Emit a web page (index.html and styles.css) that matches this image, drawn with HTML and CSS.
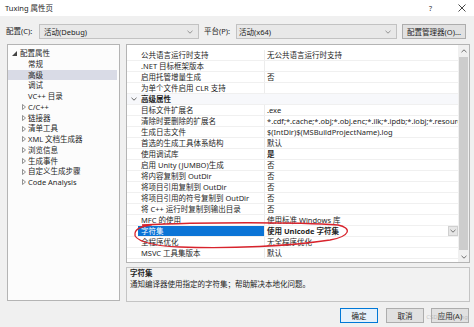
FILE: index.html
```html
<!DOCTYPE html>
<html lang="zh-CN">
<head>
    <meta charset="UTF-8">
    <title>Tuxing 属性页</title>
    <link rel="stylesheet" href="styles.css">
</head>
<body>
<div class="window">
    <div class="titlebar">
        <span class="title">Tuxing 属性页</span>
        <span class="help">?</span>
        <svg class="close" width="8" height="8" viewBox="0 0 8 8"><path d="M0.5 0.5L7.5 7.5M7.5 0.5L0.5 7.5" stroke="#333" stroke-width="0.9" fill="none"/></svg>
    </div>

    <div class="toolbar">
        <span class="lbl lbl-config">配置(C):</span>
        <div class="combo combo-config">
            <span>活动(Debug)</span>
            <svg width="6" height="4" viewBox="0 0 6 4"><path d="M0.5 0.8L3 3.2L5.5 0.8" stroke="#8a8a8a" stroke-width="0.9" fill="none"/></svg>
        </div>
        <span class="lbl lbl-platform">平台(P):</span>
        <div class="combo combo-platform">
            <span>活动(x64)</span>
            <svg width="6" height="4" viewBox="0 0 6 4"><path d="M0.5 0.8L3 3.2L5.5 0.8" stroke="#8a8a8a" stroke-width="0.9" fill="none"/></svg>
        </div>
        <button class="btn btn-manager">配置管理器(O)...</button>
    </div>

    <div class="content">
        <div class="tree">
            <div class="node lvl0"><svg class="tw" width="5" height="5" viewBox="0 0 5 5"><path d="M5 0L5 5L0 5Z" fill="#444"/></svg>配置属性</div>
            <div class="node lvl1">常规</div>
            <div class="node lvl1 selected">高级</div>
            <div class="node lvl1">调试</div>
            <div class="node lvl1">VC++ 目录</div>
            <div class="node lvl1 parent"><svg class="tw" width="4" height="6" viewBox="0 0 4 6"><path d="M0.5 0.5L3.5 3L0.5 5.5Z" fill="none" stroke="#777" stroke-width="0.8"/></svg>C/C++</div>
            <div class="node lvl1 parent"><svg class="tw" width="4" height="6" viewBox="0 0 4 6"><path d="M0.5 0.5L3.5 3L0.5 5.5Z" fill="none" stroke="#777" stroke-width="0.8"/></svg>链接器</div>
            <div class="node lvl1 parent"><svg class="tw" width="4" height="6" viewBox="0 0 4 6"><path d="M0.5 0.5L3.5 3L0.5 5.5Z" fill="none" stroke="#777" stroke-width="0.8"/></svg>清单工具</div>
            <div class="node lvl1 parent"><svg class="tw" width="4" height="6" viewBox="0 0 4 6"><path d="M0.5 0.5L3.5 3L0.5 5.5Z" fill="none" stroke="#777" stroke-width="0.8"/></svg>XML 文档生成器</div>
            <div class="node lvl1 parent"><svg class="tw" width="4" height="6" viewBox="0 0 4 6"><path d="M0.5 0.5L3.5 3L0.5 5.5Z" fill="none" stroke="#777" stroke-width="0.8"/></svg>浏览信息</div>
            <div class="node lvl1 parent"><svg class="tw" width="4" height="6" viewBox="0 0 4 6"><path d="M0.5 0.5L3.5 3L0.5 5.5Z" fill="none" stroke="#777" stroke-width="0.8"/></svg>生成事件</div>
            <div class="node lvl1 parent"><svg class="tw" width="4" height="6" viewBox="0 0 4 6"><path d="M0.5 0.5L3.5 3L0.5 5.5Z" fill="none" stroke="#777" stroke-width="0.8"/></svg>自定义生成步骤</div>
            <div class="node lvl1 parent"><svg class="tw" width="4" height="6" viewBox="0 0 4 6"><path d="M0.5 0.5L3.5 3L0.5 5.5Z" fill="none" stroke="#777" stroke-width="0.8"/></svg>Code Analysis</div>
        </div>

        <div class="right">
            <div class="grid">
                <div class="rows">
                    <div class="row"><span class="gut"></span><span class="name">公共语言运行时支持</span><span class="val">无公共语言运行时支持</span></div>
                    <div class="row"><span class="gut"></span><span class="name">.NET 目标框架版本</span><span class="val"></span></div>
                    <div class="row"><span class="gut"></span><span class="name">启用托管增量生成</span><span class="val">否</span></div>
                    <div class="row"><span class="gut"></span><span class="name">为单个文件启用 CLR 支持</span><span class="val"></span></div>
                    <div class="row category"><span class="gut"><svg width="6" height="4" viewBox="0 0 6 4"><path d="M0.5 0.8L3 3.2L5.5 0.8" stroke="#555" stroke-width="0.9" fill="none"/></svg></span><span class="name">高级属性</span></div>
                    <div class="row"><span class="gut"></span><span class="name">目标文件扩展名</span><span class="val">.exe</span></div>
                    <div class="row"><span class="gut"></span><span class="name">清除时要删除的扩展名</span><span class="val">*.cdf;*.cache;*.obj;*.obj.enc;*.ilk;*.ipdb;*.iobj;*.resources;*.tlb;*.tli</span></div>
                    <div class="row"><span class="gut"></span><span class="name">生成日志文件</span><span class="val">$(IntDir)$(MSBuildProjectName).log</span></div>
                    <div class="row"><span class="gut"></span><span class="name">首选的生成工具体系结构</span><span class="val">默认</span></div>
                    <div class="row"><span class="gut"></span><span class="name">使用调试库</span><span class="val bold">是</span></div>
                    <div class="row"><span class="gut"></span><span class="name">启用 Unity (JUMBO)生成</span><span class="val">否</span></div>
                    <div class="row"><span class="gut"></span><span class="name">将内容复制到 OutDir</span><span class="val">否</span></div>
                    <div class="row"><span class="gut"></span><span class="name">将项目引用复制到 OutDir</span><span class="val">否</span></div>
                    <div class="row"><span class="gut"></span><span class="name">将项目引用的符号复制到 OutDir</span><span class="val">否</span></div>
                    <div class="row"><span class="gut"></span><span class="name">将 C++ 运行时复制到输出目录</span><span class="val">否</span></div>
                    <div class="row"><span class="gut"></span><span class="name">MFC 的使用</span><span class="val">使用标准 Windows 库</span></div>
                    <div class="row selected"><span class="gut"></span><span class="name">字符集</span><span class="val bold">使用 Unicode 字符集<span class="drop"><svg width="6" height="4" viewBox="0 0 6 4"><path d="M0.5 0.8L3 3.2L5.5 0.8" stroke="#666" stroke-width="0.9" fill="none"/></svg></span></span></div>
                    <div class="row"><span class="gut"></span><span class="name">全程序优化</span><span class="val">无全程序优化</span></div>
                    <div class="row"><span class="gut"></span><span class="name">MSVC 工具集版本</span><span class="val">默认</span></div>
                </div>
                <div class="scrollbar">
                    <div class="arrow"><svg width="6" height="4" viewBox="0 0 6 4"><path d="M0.5 3.2L3 0.8L5.5 3.2" stroke="#606060" stroke-width="0.9" fill="none"/></svg></div>
                    <div class="thumb"></div>
                    <div class="arrow"><svg width="6" height="4" viewBox="0 0 6 4"><path d="M0.5 0.8L3 3.2L5.5 0.8" stroke="#606060" stroke-width="0.9" fill="none"/></svg></div>
                </div>
            </div>
            <div class="desc">
                <div class="desc-title">字符集</div>
                <div class="desc-text">通知编译器使用指定的字符集；帮助解决本地化问题。</div>
            </div>
        </div>
    </div>

    <div class="footer">
        <button class="btn btn-ok">确定</button>
        <button class="btn btn-cancel">取消</button>
        <button class="btn btn-apply">应用(A)</button>
    </div>

    <span class="watermark">CSDN @Tuxing</span>

    <!-- hand drawn red mark around the 字符集 row -->
    <svg class="mark" width="474" height="327" viewBox="0 0 474 327">
        <path d="M142 225 C200 222 300 222 338 225 C352 228 351 236 330 240 C290 246 232 249 180 247 C150 246 133 240 135 233 C136 229 140 226 152 225" fill="none" stroke="#d8232c" stroke-width="1.3"/>
    </svg>
</div>
</body>
</html>
```

FILE: styles.css
```css
* {
    box-sizing: border-box;
}

body {
    margin: 0;
    padding: 0;
    background-color: #f0f0f0;
    font-family: "Noto Sans", "Noto Sans CJK SC", sans-serif;
    font-size: 7.5px;
    color: #1e1e1e;
}

.window {
    position: relative;
    width: 474px;
    height: 327px;
    overflow: hidden;
}

.titlebar {
    display: flex;
    align-items: center;
    height: 16px;
    padding-left: 5px;
    background-color: #ffffff;
}

.title {
    flex: 1;
    line-height: 14px;
}

.help {
    width: 8px;
    margin-right: 21px;
    color: #333;
    font-size: 7px;
}

.close {
    margin-right: 8px;
}

.toolbar {
    display: flex;
    align-items: center;
    height: 15px;
    margin-top: 8px;
    padding-left: 6px;
}

.lbl {
    line-height: 15px;
}

.lbl-config {
    width: 33px;
}

.lbl-platform {
    width: 32px;
    margin-left: 5px;
}

.combo {
    display: flex;
    align-items: center;
    justify-content: space-between;
    height: 15px;
    padding: 0 5px 0 4px;
    background-color: #e8e8e8;
    border: 1px solid #c2c2c2;
}

.combo-config {
    width: 160px;
}

.combo-platform {
    width: 161px;
    padding-left: 2px;
}

.btn {
    height: 15px;
    padding: 0;
    font-family: inherit;
    font-size: 7.5px;
    color: #1e1e1e;
    background-color: #e1e1e1;
    border: 1px solid #adadad;
}

.btn-manager {
    width: 64px;
    margin-left: 5px;
}

.content {
    display: flex;
    gap: 6px;
    margin-top: 5px;
    padding-left: 7px;
}

.tree {
    width: 113px;
    height: 257px;
    padding: 3px 2px 0 0;
    background-color: #fcfcfc;
    border: 1px solid #b4b4b4;
}

.node {
    display: flex;
    align-items: center;
    height: 10.75px;
    line-height: 10.75px;
    white-space: nowrap;
}

.node .tw {
    flex: none;
}

.lvl0 {
    padding-left: 4px;
}

.lvl0 .tw {
    margin-right: 3px;
}

.lvl1 {
    padding-left: 20px;
}

.lvl1.parent {
    padding-left: 14px;
}

.lvl1.parent .tw {
    margin-right: 2px;
}

.node.selected {
    background-color: #d9dbe6;
}

.right {
    display: flex;
    flex-direction: column;
    gap: 4px;
    width: 344px;
}

.grid {
    display: flex;
    height: 219px;
    background-color: #ffffff;
    border: 1px solid #b4b4b4;
}

.rows {
    flex: 1;
    padding-top: 5px;
    overflow: hidden;
}

.row {
    display: flex;
    height: 11px;
    line-height: 10px;
    border-bottom: 1px solid #f0f0f0;
    white-space: nowrap;
}

.gut {
    display: flex;
    align-items: center;
    justify-content: center;
    width: 11px;
    flex: none;
}

.gut svg {
    margin-left: 3px;
}

.name {
    width: 127px;
    flex: none;
    padding-left: 3px;
    border-right: 1px solid #ececec;
    overflow: hidden;
}

.val {
    flex: 1;
    display: flex;
    align-items: center;
    padding-left: 2px;
    overflow: hidden;
}

.bold {
    font-weight: bold;
}

.row.category {
    background-color: #f7f8fb;
}

.row.category .name {
    border-right: none;
    font-weight: bold;
}

.row.selected .name {
    background-color: #0b74d6;
    color: #ffffff;
}

.drop {
    display: flex;
    align-items: center;
    justify-content: center;
    width: 10px;
    height: 10px;
    margin-left: auto;
    margin-right: 0;
    background-color: #e6e6e6;
    border: 1px solid #d0d0d0;
}

.scrollbar {
    display: flex;
    flex-direction: column;
    width: 11px;
    background-color: #f0f0f0;
}

.arrow {
    display: flex;
    align-items: center;
    justify-content: center;
    height: 11px;
}

.thumb {
    flex: 1;
    margin: 1px 1px;
    background-color: #cdcdcd;
}

.desc {
    height: 35px;
    padding-left: 3px;
    background-color: #f2f2f2;
    border: 1px solid #c4c4c4;
}

.desc-title {
    font-weight: bold;
    line-height: 11px;
}

.desc-text {
    line-height: 11px;
}

.footer {
    display: flex;
    justify-content: flex-end;
    margin-top: 6px;
    padding-right: 5px;
}

.footer .btn {
    width: 38px;
}

.btn-ok {
    background-color: #e5f1fb;
    border-color: #0078d7;
}

.btn-cancel {
    margin-left: 8px;
}

.btn-apply {
    margin-left: 7px;
}

.watermark {
    position: absolute;
    right: 6px;
    bottom: 6px;
    font-size: 6px;
    color: rgba(160, 160, 160, 0.55);
}

.mark {
    position: absolute;
    left: 0;
    top: 0;
    pointer-events: none;
}
```
